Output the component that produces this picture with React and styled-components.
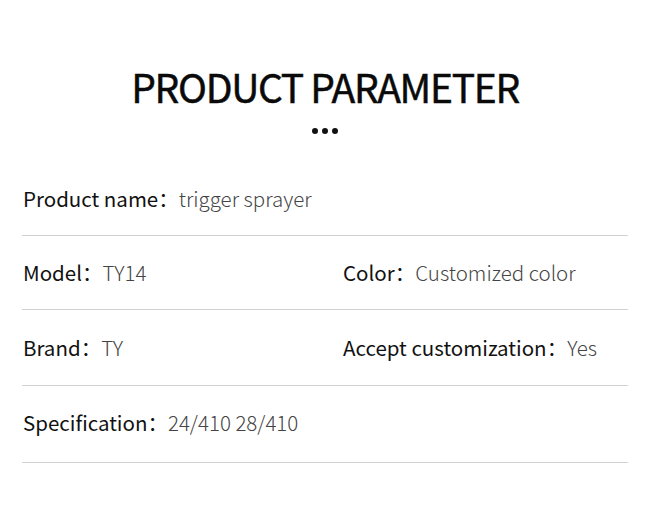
import React from "react";
import styled, { createGlobalStyle } from "styled-components";

const Global = createGlobalStyle`
  html, body { margin: 0; padding: 0; background: #fff; }
  body { font-family: "Noto Sans CJK SC", "Noto Sans", sans-serif; color: #111; }
`;

const Page = styled.div`
  width: 650px;
  padding: 0 22px;
  box-sizing: border-box;
`;

const Header = styled.header`
  display: flex;
  flex-direction: column;
  align-items: center;
  padding-top: 62px;
  height: 160px;
  box-sizing: border-box;
`;

const Title = styled.h1`
  margin: 0;
  font-size: 39px;
  font-weight: 400;
  line-height: 49px;
  color: #0a0a0a;
  letter-spacing: -1.3px;
  -webkit-text-stroke: 0.5px #0a0a0a;
`;

const Dots = styled.div`
  display: flex;
  gap: 4px;
  margin-top: 17px;
`;

const Dot = styled.span`
  width: 6px;
  height: 6px;
  border-radius: 50%;
  background: #111;
`;

const Row = styled.div`
  display: grid;
  grid-template-columns: 320px 1fr;
  height: ${(p) => p.$h}px;
  align-items: center;
  border-bottom: 1.5px solid #d2d2d2;
  box-sizing: border-box;
  padding-bottom: ${(p) => p.$pb}px;
`;

const Field = styled.div`
  font-size: 20.5px;
  line-height: 28px;
  padding-left: 1px;
  white-space: nowrap;
`;

const Label = styled.span`
  font-weight: 400;
  color: #111;
`;

const Value = styled.span`
  font-weight: 300;
  color: #444;
`;

const rows = [
  { h: 76, pb: 0, items: [["Product name", "trigger sprayer"]] },
  { h: 74, pb: 2, items: [["Model", "TY14"], ["Color", "Customized color"]] },
  { h: 76, pb: 2, items: [["Brand", "TY"], ["Accept customization", "Yes"]] },
  { h: 77, pb: 4, items: [["Specification", "24/410 28/410"]] },
];

export default function App() {
  return (
    <Page>
      <Global />
      <Header>
        <Title>PRODUCT PARAMETER</Title>
        <Dots>
          <Dot />
          <Dot />
          <Dot />
        </Dots>
      </Header>
      {rows.map((r, i) => (
        <Row key={i} $h={r.h} $pb={r.pb}>
          {r.items.map(([l, v]) => (
            <Field key={l}>
              <Label>{l}：</Label>
              <Value>{v}</Value>
            </Field>
          ))}
        </Row>
      ))}
    </Page>
  );
}
